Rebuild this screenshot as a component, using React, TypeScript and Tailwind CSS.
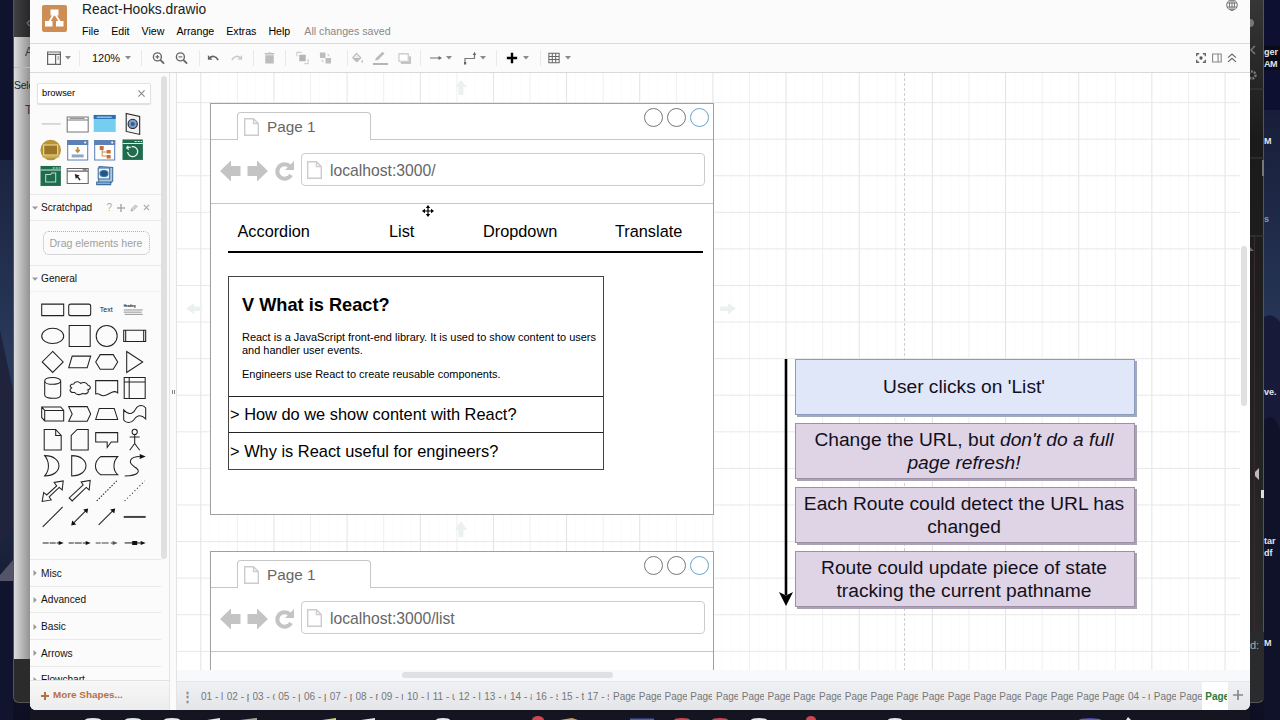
import React from "react";

const menuItems = ["File", "Edit", "View", "Arrange", "Extras", "Help"];

const pageTabs = [
  "01 - l", "02 - p", "03 - c", "05 - p", "06 - p", "07 - p", "08 - r", "09 - r",
  "10 - l", "11 - u", "12 - l", "13 - c", "14 - a", "16 - s", "15 - t", "17 - s",
  ...Array(20).fill("Page"),
  "04 - r", "Page", "Page",
];

const steps = [
  {
    text: "User clicks on 'List'",
    className: "bg-[#dfe7f8] border-[#8c9bbb] shadow-[2px_2px_0_#a3aabb]",
  },
  {
    text: (
      <>
        Change the URL, but <i>don't do a full page refresh!</i>
      </>
    ),
    className: "bg-[#dfd4e5] border-[#9d90a6] shadow-[2px_2px_0_#aba3b2]",
  },
  {
    text: "Each Route could detect the URL has changed",
    className: "bg-[#dfd4e5] border-[#9d90a6] shadow-[2px_2px_0_#aba3b2]",
  },
  {
    text: "Route could update piece of state tracking the current pathname",
    className: "bg-[#dfd4e5] border-[#9d90a6] shadow-[2px_2px_0_#aba3b2]",
  },
];

const Caret = ({ className = "" }: { className?: string }) => (
  <svg className={`h-1 w-1.5 shrink-0 ${className}`} viewBox="0 0 6 4">
    <path d="M0 0H6L3 3.6Z" fill="#8a8a8a" />
  </svg>
);

const Divider = ({ className }: { className: string }) => (
  <div className={`h-4 w-px shrink-0 bg-[#e9e9e9] ${className}`} />
);

const ToolIcon = ({
  className,
  children,
}: {
  className: string;
  children: React.ReactNode;
}) => (
  <svg
    className={`h-[14px] shrink-0 ${className}`}
    viewBox="0 0 14 14"
    fill="none"
    stroke="#666"
    strokeWidth="1.2"
  >
    {children}
  </svg>
);

const Toolbar = () => (
  <div className="flex h-[29px] shrink-0 items-center border-b border-[#d9d9d9] bg-[#fbfbfb] pl-[17px]">
    <ToolIcon className="w-[14px]">
      <path d="M.6 1H13.4V13.4H.6ZM.6 3.4H13.4M8.6 3.4V13.4M10.5 6H12M10.5 8H12" />
    </ToolIcon>
    <Caret className="ml-1" />
    <Divider className="ml-2" />
    <span className="ml-3 w-[29px] text-[11px] text-[#111]">120%</span>
    <Caret className="ml-1" />
    <Divider className="ml-2.5" />
    <ToolIcon className="ml-2.5 w-[13px]">
      <circle cx="5.8" cy="5.8" r="4.3" strokeWidth="1.5" />
      <path d="M9 9L13 13" strokeWidth="2" />
      <path d="M3.8 5.8H7.8M5.8 3.8V7.8" />
    </ToolIcon>
    <ToolIcon className="ml-2.5 w-[13px]">
      <circle cx="5.8" cy="5.8" r="4.3" strokeWidth="1.5" />
      <path d="M9 9L13 13" strokeWidth="2" />
      <path d="M3.8 5.8H7.8" />
    </ToolIcon>
    <Divider className="ml-[11px]" />
    <ToolIcon className="ml-[7px] w-3">
      <path d="M2.5 7.5C6 3.8 10.5 4.5 13 9.5" strokeWidth="2" />
      <path d="M1 3.5V9H6.5Z" fill="#666" stroke="none" />
    </ToolIcon>
    <ToolIcon className="ml-3 w-3">
      <path d="M11.5 7.5C8 3.8 3.5 4.5 1 9.5" stroke="#ccc" strokeWidth="2" />
      <path d="M13 3.5V9H7.5Z" fill="#ccc" stroke="none" />
    </ToolIcon>
    <Divider className="ml-2.5" />
    <ToolIcon className="ml-2.5 w-[11px]">
      <path d="M1 .6H5L6 0H8.5L9.5 .6H13V2.6H1ZM1.6 3.6H12.400V14H1.6Z" fill="#bcbcbc" stroke="none" />
    </ToolIcon>
    <Divider className="ml-2.5" />
    <ToolIcon className="ml-2.5 w-[13px]">
      <path d="M1 5V1H6M9 13H13V8" stroke="#ccc" />
      <path d="M3.5 3.5H10.5V10.5H3.5Z" fill="#b5b5b5" stroke="none" />
    </ToolIcon>
    <ToolIcon className="ml-2.5 w-[13px]">
      <path d="M1 1H7V7H1ZM7 7H13V13H7Z" fill="#bdbdbd" stroke="none" />
      <path d="M9 3.5H10.5V5M3.5 9V10.5H5" stroke="#ccc" />
    </ToolIcon>
    <Divider className="ml-[15px]" />
    <ToolIcon className="ml-[3px] w-[13px]">
      <path d="M6 2L10.5 6.8L6.2 11L1.8 6.8Z" fill="#eee" stroke="#bbb" />
      <path d="M2 7H10.5L6.2 11ZM12 8.5C13.4 10.5 13 12 12 12S10.8 10.5 12 8.5Z" fill="#bbb" stroke="none" />
    </ToolIcon>
    <svg className="ml-[9px] h-[15px] w-[15px] shrink-0" viewBox="0 0 15 15">
      <path d="M2 9.5L3 7L9.5 .7L11.5 2.6L5 9Z" fill="#bbb" />
      <path d="M0 12H15V14H0Z" fill="#b5b5b5" />
    </svg>
    <ToolIcon className="ml-2.5 w-[13px]">
      <path d="M3 12.3H13V5" stroke="#bbb" strokeWidth="1.8" />
      <path d="M1 2.5H11V10.5H1Z" fill="#fff" stroke="#c4c4c4" />
    </ToolIcon>
    <Divider className="ml-[9px]" />
    <ToolIcon className="ml-[9px] w-3">
      <path d="M0 7H11" stroke="#777" />
      <path d="M10 4.8L14 7L10 9.2Z" fill="#666" stroke="none" />
    </ToolIcon>
    <Caret className="ml-1" />
    <ToolIcon className="ml-[11px] w-[14px]">
      <path d="M2 13V7.5H11.5V3" stroke="#777" />
      <path d="M9.8 4L11.5 .8L13.2 4ZM1 11H3.2V13.6H1Z" fill="#666" stroke="none" />
    </ToolIcon>
    <Caret className="ml-[3px]" />
    <Divider className="ml-2.5" />
    <ToolIcon className="ml-[9px] w-3">
      <path d="M1 7H13M7 1V13" stroke="#000" strokeWidth="2.8" />
    </ToolIcon>
    <Caret className="ml-[5px]" />
    <Divider className="ml-[11px]" />
    <ToolIcon className="ml-[7px] w-3">
      <path d="M1 1.5H13V12.5H1ZM1 5.2H13M1 8.8H13M5 1.5V12.5M9 1.5V12.5" />
    </ToolIcon>
    <Caret className="ml-[5px]" />
    <div className="ml-auto flex items-center gap-[5px] pr-[13px]">
      <ToolIcon className="w-[10px]">
        <path d="M1 4.5V1H4.5M9.5 1H13V4.5M13 9.5V13H9.5M4.5 13H1V9.5" strokeWidth="1.9" />
        <circle cx="7" cy="7" r="2.3" fill="#555" stroke="none" />
      </ToolIcon>
      <ToolIcon className="w-[11px]">
        <path d="M2 2H13V12H2ZM9 2V12" stroke="#888" strokeWidth="1.4" />
      </ToolIcon>
      <ToolIcon className="w-[10px]">
        <path d="M1.500 6.500L7 1.500L12.500 6.500M1.500 12.500L7 7.500L12.500 12.500" strokeWidth="1.600" />
      </ToolIcon>
    </div>
  </div>
);

const searchResults: React.ReactNode[] = [
  <path d="M-9 0H10" stroke="#bbb" />,
  <g stroke="#777">
    <path d="M-10.5 -7H10.5V8H-10.5Z" fill="#fff" />
    <path d="M-10.5 -4H10.5M-8 -5.6H7" />
  </g>,
  <g stroke="none">
    <path d="M-11 -9H11V8H-11Z" fill="#75cdf0" />
    <path d="M-11 -9H11V-5H-11Z" fill="#2c6eb0" />
    <path d="M-8 -7.5H7V-6H-8Z" fill="#8cc4e8" />
  </g>,
  <g stroke="#222">
    <path d="M-6.5 -10.5L7 -7.5V10.5L-6.5 7.5Z" fill="#f2f2f2" />
    <circle r="4.6" cx="0" cy="0" fill="#7ba0cf" />
    <circle r="2" fill="#38598c" stroke="none" />
  </g>,
  <g stroke="none">
    <circle r="10.3" fill="#b89438" />
    <path d="M-7 -5H7V5H-7Z" fill="#9c7826" stroke="#f1dfa6" />
    <path d="M-9 7H9" stroke="#d8bf74" />
  </g>,
  <g stroke="#5d81b6">
    <path d="M-10 -9.5H10V10H-10Z" fill="#fff" />
    <path d="M-10 -9.5H10V-5.5H-10Z" fill="#5d81b6" />
    <circle cx="7.5" cy="-7.5" r="1" fill="#fff" stroke="none" />
    <path d="M0 -3V1M-2 0L0 2L2 0" stroke="#bd8f35" strokeWidth="1.7" />
    <path d="M-6 6H6" strokeWidth="3" stroke="#8da7cb" />
  </g>,
  <g stroke="#5d81b6">
    <path d="M-10 -9.5H10V10H-10Z" fill="#fff" />
    <path d="M-10 -9.5H10V-5.5H-10Z" fill="#5d81b6" />
    <circle cx="7.5" cy="-7.5" r="1" fill="#fff" stroke="none" />
    <path d="M-2.5 -1V6H3M-2.5 2H3" fill="none" stroke="#d08e4c" />
    <path d="M-5 -4H-1V0H-5ZM2 0H6V3.5H2ZM2 5H6V8.5H2Z" fill="#c5703c" stroke="none" />
  </g>,
  <g stroke="none">
    <path d="M-10.2 -10.5H10.2V10H-10.2Z" fill="#1f6b4e" />
    <path d="M-10 -6.5H10M2 -8.5H4M5 -8.5H7M8 -8.5H9.5" stroke="#d8ece2" />
    <path d="M-5 2A5 5 0 1 0 -1 -3.2M-5.5 -2.5H-2M-4.5 -4L-6 -2L-3.8 -.5" fill="none" stroke="#e8f4ee" strokeWidth="1.3" />
  </g>,
  <g stroke="none">
    <path d="M-10.2 -10H10.2V10H-10.2Z" fill="#1f6b4e" />
    <path d="M-10 -6H10M2 -8H4M5 -8H7M8 -8H9.5" stroke="#d8ece2" />
    <path d="M-5 6V-1.5H0L1 -3H5V6Z" fill="none" stroke="#b8dccb" />
  </g>,
  <g stroke="#666">
    <path d="M-10.5 -7.5H10.5V7.5H-10.5Z" fill="#fff" />
    <path d="M-10.5 -4.8H10.5M5 -6.2H9" />
    <path d="M-3 -2L2 -.5L.5 .6L3 3.8L1.8 4.6L-.5 1.5L-1.8 3Z" fill="#222" stroke="none" />
  </g>,
  <g stroke="#3f6d9c">
    <path d="M-5.5 -9.5L8 -8.5V5L6 7H-6Z" fill="#a9cae4" />
    <path d="M-6.5 -8H5V3H-6.5Z" fill="#e2eff8" />
    <ellipse cx="-.7" cy="-2.5" rx="4" ry="3" fill="#1f5588" />
    <path d="M-8 6H6V8.7H-8Z" fill="#83b1d6" />
  </g>,
];

const generalShapes: React.ReactNode[] = [
  <path d="M-11 -5.8H11V5.7H-11Z" />,
  <rect x="-11" y="-5.8" width="22" height="11.5" rx="2" />,
  <text x="-.5" y="2.5" textAnchor="middle" fontSize="7" fill="#222" stroke="none">Text</text>,
  <g>
    <text x="-11" y="-3" fontSize="3" fontWeight="bold" fill="#000" stroke="none">Heading</text>
    <path d="M-11 0H8M-11 2.2H7M-10 4.4H8" stroke="#777" strokeWidth=".8" />
  </g>,
  <ellipse rx="11" ry="7.6" />,
  <path d="M-10.5 -10.5H10.5V10.5H-10.5Z" />,
  <circle r="10.5" />,
  <path d="M-11 -5.6H11V5.6H-11ZM-9 -5.6V5.6M9 -5.6V5.6" />,
  <path d="M0 -10.5L10.5 0L0 10.5L-10.5 0Z" />,
  <path d="M-7.5 -5.8H11L7.5 5.8H-11Z" />,
  <path d="M-6.5 -7.3H6.5L11 0L6.5 7.3H-6.5L-11 0Z" />,
  <path d="M-8 -10.5L8 0L-8 10.5Z" />,
  <path d="M-8 -7C-8 -11.5 8 -11.5 8 -7V7C8 11.5 -8 11.5 -8 7ZM-8 -7C-8 -2.5 8 -2.5 8 -7" />,
  <path d="M-6 -4C-9 -4 -11 -2 -8 0C-12 3 -8 5 -5 4.5C-3 7.5 1 7 3 5.5C7 7 10 4 8 2C12 1 11 -2.5 8 -3C7 -6 3 -6 1 -4.5C-1 -7 -5 -6.5 -6 -4Z" />,
  <path d="M-11 -7.3H11V5C5 0 0 11 -6 7C-8 5.8 -9 5.5 -11 6Z" />,
  <path d="M-10.5 -10.5H10.5V10.5H-10.5ZM-10.5 -6H10.5M-5.5 -10.5V10.5" />,
  <path d="M-11 -7H8L11 -3.5V7H-8L-11 3.5ZM-11 -7L-8 -3.5V7M-8 -3.5H11" />,
  <path d="M-11 -7.3H7.5L11 0L7.5 7.3H-11L-7.5 0Z" />,
  <path d="M-7.5 -5.5H7.5L11 5.5H-11Z" />,
  <path d="M-11 -4C-5 3 0 -2 1 -5C4 -10 9 -9 11 -6V5C5 -1 1 3 -1 6C-4 10 -9 9 -11 6Z" />,
  <path d="M-8.5 -10.5H3L8.5 -4.5V10H-8.5ZM3 -10.5V-4.5H8.5" />,
  <path d="M-2.5 -10.5H8.5V10H-8.5V-4.5Z" />,
  <path d="M-11 -7.3H11V2H4.5L.5 7.5V2H-11Z" />,
  <g>
    <circle cy="-8" r="2.6" />
    <path d="M0 -5.3V3.5M-5 -3H5M0 3.5L-5 10.3M0 3.5L5 10.3" />
  </g>,
  <path d="M-8 -10.3C11 -10.3 11 10 -8 10C-3 4 -3 -4 -8 -10.3Z" />,
  <path d="M-8 -10.3C11 -10.3 11 10 -8 10Z" />,
  <path d="M-6 -9.3H11C6 -4 6 4 11 8.8H-6C-13 4 -13 -4 -6 -9.3Z" />,
  <g>
    <path d="M-10 10C4 10 7 5 0 1C-8 -4 -4 -9.5 5 -9.5" />
    <path d="M5 -12L11 -9.5L5 -7Z" fill="#111" stroke="none" />
  </g>,
  <path d="M10.5 -10L9.5 -1L6.5 -3.5L-3.5 6L-1.5 9L-10.5 10.5L-9 1.5L-6 4L4 -5L1.5 -8.5Z" />,
  <path d="M10.5 -10.5L9.5 -1L6.5 -3.5L-7.5 10L-10.5 7L3.5 -6L1.5 -9Z" />,
  <path d="M-10 10L10 -10" strokeDasharray="1.5 1.5" />,
  <path d="M-10 10L10 -10" strokeDasharray="1 2.5" />,
  <path d="M-10 10L10 -10" />,
  <g>
    <path d="M-7 7L7 -7" />
    <path d="M8.5 -8.5L7.5 -3.5L3.5 -7.5ZM-8.5 8.5L-7.5 3.5L-3.5 7.5Z" fill="#111" stroke="none" />
  </g>,
  <g>
    <path d="M-8 8L7 -7" />
    <path d="M8.5 -8.5L7.5 -3.5L3.5 -7.5Z" fill="#111" stroke="none" />
  </g>,
  <path d="M-11 0H11" stroke="#444" strokeWidth="2" />,
  <g>
    <path d="M-10 0H8" strokeDasharray="6 1" />
    <path d="M6 -2L11 0L6 2Z" fill="#111" stroke="none" />
  </g>,
  <g>
    <path d="M-11 0H8" strokeDasharray="5 1 7 1" />
    <path d="M6 -2L11 0L6 2Z" fill="#111" stroke="none" />
  </g>,
  <g>
    <path d="M-11 0H8" strokeDasharray="5 1 7 2" stroke="#444" />
    <path d="M6 -2L11 0L6 2Z" fill="#555" stroke="none" />
  </g>,
  <g>
    <path d="M-10 0H8" />
    <path d="M6 -2L11 0L6 2ZM-2.5 -2H2.5V2H-2.5Z" fill="#111" stroke="none" />
  </g>,
];

const ShapeCell = ({ children }: { children: React.ReactNode }) => (
  <svg
    className="h-[25.9px] w-[27.4px]"
    viewBox="-13.7 -12.95 27.4 25.9"
    fill="none"
    stroke="#222"
    strokeWidth="1.05"
  >
    {children}
  </svg>
);

const Section = ({ title, open, children }: { title: string; open?: boolean; children?: React.ReactNode }) => (
  <div className="flex h-[26.6px] shrink-0 items-center border-t border-[#e8e8e8] pl-[2px] pt-px text-[10.15px] text-[#111]">
    <svg className="mr-[3px] h-[6px] w-[6px]" viewBox="0 0 6 6">
      <path d={open ? "M0 1.5H6L3 4.8Z" : "M1.5 0V6L4.8 3Z"} fill="#999" />
    </svg>
    {title}
    {children}
  </div>
);

const Sidebar = () => (
  <div className="flex w-[139px] shrink-0 flex-col bg-[#fbfbfb]">
    <div className="flex h-[607px] overflow-hidden">
      <div className="flex w-[131px] flex-col pt-[10px]">
        <div className="ml-[7px] flex h-[21px] w-[114px] shrink-0 items-center justify-between rounded-xs border border-[#e2e2e2] bg-white px-1 text-[9.3px] text-black shadow-[0_1px_1px_#ddd]">
          browser
          <svg className="mr-px h-[7px] w-[7px]" viewBox="0 0 8 8">
            <path d="M.5 .5L7.5 7.5M7.5 .5L.5 7.5" stroke="#888" strokeWidth="1.3" />
          </svg>
        </div>
        <div className="ml-[6.5px] mt-[7px] grid shrink-0 grid-cols-[repeat(4,27.4px)]">
          {searchResults.map((shape, index) => (
            <ShapeCell key={index}>{shape}</ShapeCell>
          ))}
        </div>
        <div className="mt-[5px] flex flex-col">
          <Section title="Scratchpad" open>
            <div className="ml-auto mr-[11px] flex items-center gap-[5px] text-[10px] text-[#aaa]">
              ?
              <svg className="h-2 w-2" viewBox="0 0 8 8">
                <path d="M0 4H8M4 0V8" stroke="#aaa" strokeWidth="1.5" />
              </svg>
              <svg className="h-2 w-2" viewBox="0 0 8 8">
                <path d="M1 7L1.5 5L5.5 1L7 2.5L3 6.5Z" fill="#ddd" stroke="#aaa" />
              </svg>
              <svg className="h-[7px] w-[7px]" viewBox="0 0 8 8">
                <path d="M1 1L7 7M7 1L1 7" stroke="#aaa" strokeWidth="1.4" />
              </svg>
            </div>
          </Section>
          <div className="flex h-[44.4px] items-center justify-center border-t border-[#e8e8e8]">
            <div className="ml-px flex h-6 w-[107px] items-center justify-center rounded-md border-[1.5px] border-dotted border-[#b0b0b0] pt-px text-[10.6px] text-[#a0a0a0]">
              Drag elements here
            </div>
          </div>
          <Section title="General" open />
          <div className="border-t border-[#f0f0f0] pb-[3px] pl-[8.5px] pt-[5px]">
            <div className="grid grid-cols-[repeat(4,27.4px)]">
              {generalShapes.map((shape, index) => (
                <ShapeCell key={index}>{shape}</ShapeCell>
              ))}
            </div>
          </div>
          <Section title="Misc" />
          <Section title="Advanced" />
          <Section title="Basic" />
          <Section title="Arrows" />
          <Section title="Flowchart" />
        </div>
      </div>
      <div className="mt-[3px] h-[483px] w-[6px] rounded-full bg-[#e0e0e0]" />
    </div>
    <div className="flex flex-1 items-center border-t border-[#e2e2e2] bg-linear-to-b from-[#f8f8f8] to-[#ececee] pl-[11px] text-[9.9px] font-bold text-[#b8703f]">
      <svg className="mr-1 h-2 w-2" viewBox="0 0 8 8">
        <path d="M0 4H8M4 0V8" stroke="#b8703f" strokeWidth="2" />
      </svg>
      More Shapes...
    </div>
  </div>
);

const PageIcon = () => (
  <svg className="h-[18px] w-[15px]" viewBox="0 0 15 18">
    <path d="M.7 .7H9.5L14.3 5.5V17.3H.7ZM9.5 .7V5.5H14.3" fill="#fff" stroke="#ccc" strokeWidth="1.4" />
  </svg>
);

const BrowserMock = ({
  url,
  className,
  children,
}: {
  url: string;
  className: string;
  children?: React.ReactNode;
}) => (
  <div className={`absolute left-[33px] w-[504px] border-[1.5px] border-[#a0a0a0] bg-white ${className}`}>
    <div className="flex h-[36px]">
      <div className="w-[26px] border-b border-[#c6c6c6]" />
      <div className="mt-2 flex w-[134px] items-center rounded-t-[4px] border border-b-0 border-[#c6c6c6] pl-[6px] text-[15.3px] text-[#666]">
        <PageIcon />
        <span className="ml-2 pt-[2px]">Page 1</span>
      </div>
      <div className="flex flex-1 items-start justify-end gap-1 border-b border-[#c6c6c6] pr-[4px] pt-[3.5px]">
        <div className="h-[19px] w-[19px] rounded-full border border-[#777]" />
        <div className="h-[19px] w-[19px] rounded-full border border-[#777]" />
        <div className="h-[19px] w-[19px] rounded-full border border-[#6aa2c8]" />
      </div>
    </div>
    <div className="flex h-[64px] items-start border-b border-[#c6c6c6] pl-[9px] pt-[13px]">
      <svg className="mt-[6px] h-[24px] w-[76px]" viewBox="0 0 76 24" fill="#c4c4c4">
        <path d="M0 12L11 1.5V7H20.5V17H11V22.5Z" />
        <path d="M48 12L37 1.5V7H27.5V17H37V22.5Z" />
        <path d="M70 7.5A7.3 7.3 0 1 0 71 16" fill="none" stroke="#c4c4c4" strokeWidth="4" />
        <path d="M74 2V11H65Z" />
      </svg>
      <div className="ml-[5px] flex h-[33px] w-[404px] items-center rounded-[4px] border border-[#ccc] pl-[5px] text-[15.7px] text-[#666]">
        <PageIcon />
        <span className="ml-2 pt-[2px]">{url}</span>
      </div>
    </div>
    {children}
  </div>
);

const columnLines = Array.from({ length: 29 }, (_, i) => 23.8 + i * 36.58);
const rowLines = Array.from({ length: 16 }, (_, i) => 29.6 + i * 36.58);

const Canvas = () => (
  <div className="relative h-[597px] overflow-hidden bg-white">
    <svg className="absolute left-0 top-0 h-[597px] w-[1073px]" viewBox="0 0 1073 597">
      {columnLines.map((x) => (
        <path key={x} d={`M${x + 9.1} 0V597M${x + 18.3} 0V597M${x + 27.4} 0V597`} stroke="#fbfbfb" />
      ))}
      {columnLines.map((x, i) => (
        <path key={x} d={`M${x} 0V597`} stroke={i % 2 ? "#efefef" : "#e3e3e3"} />
      ))}
      {rowLines.map((y) => (
        <path key={y} d={`M0 ${y}H1063`} stroke="#e8e8e8" />
      ))}
      <path d="M727.5 0V597" stroke="#d0d0d0" strokeDasharray="3 2" />
      <path
        d="M284 7L290 14H286.5V22H281.5V14H278ZM284 448L290 457H286.5V464H281.5V457H278ZM9 235.5L17 230V233.5H25V238H17V241.5ZM559 235.5L551 230V233.5H543V238H551V241.5Z"
        fill="#ebf1f1"
      />
    </svg>

    <BrowserMock url="localhost:3000/" className="top-[30px] h-[412px]">
      <div className="ml-[17px] flex h-[49px] w-[475px] items-center border-b-2 border-black pt-[8px] text-[16.3px] text-black">
        <span className="ml-[9.5px] w-[151.5px]">Accordion</span>
        <span className="w-[94px]">List</span>
        <span className="w-[132px]">Dropdown</span>
        <span>Translate</span>
      </div>
      <div className="ml-[17px] mt-[23px] w-[376px] border border-[#444] text-black">
        <div className="h-[118.5px] pl-[13px] pt-[17px]">
          <h1 className="text-[18.2px] font-bold leading-[22px]">V What is React?</h1>
          <p className="mt-[15px] w-[362px] text-[10.98px] leading-[13px]">
            React is a JavaScript front-end library. It is used to show content to users
            <br />
            and handler user events.
          </p>
          <p className="mt-[11px] text-[10.98px] leading-[13px]">
            Engineers use React to create reusable components.
          </p>
        </div>
        <div className="flex h-[36.5px] items-center border-t border-[#222] pl-px text-[16.4px]">
          &gt; How do we show content with React?
        </div>
        <div className="flex h-[36.5px] items-center border-t border-[#222] pl-px pt-px text-[16.4px]">
          &gt; Why is React useful for engineers?
        </div>
      </div>
    </BrowserMock>

    <BrowserMock url="localhost:3000/list" className="top-[478px] h-[200px]" />

    <svg className="absolute left-[602px] top-[286px] h-[248px] w-[14px]" viewBox="0 0 14 248">
      <path d="M7 0V236" stroke="#000" strokeWidth="2.6" />
      <path d="M0 233L7 247L14 233L7 236.5Z" />
    </svg>
    <div className="absolute left-[618px] top-[286px] flex w-[340px] flex-col gap-2">
      {steps.map((step, index) => (
        <div
          key={index}
          className={`flex h-14 items-center justify-center border pb-px pl-[3px] pr-[5px] text-center text-[19.2px] leading-[23px] text-[#12101c] ${step.className}`}
        >
          <p>{step.text}</p>
        </div>
      ))}
    </div>

    <div className="absolute right-[3px] top-[173px] h-[160px] w-[6px] rounded-full bg-[#e0e0e0]" />
    <svg className="absolute left-[245px] top-[132px] h-3 w-3" viewBox="0 0 12 12">
      <path d="M6 1V11M1 6H11" stroke="#000" strokeWidth="1.2" />
      <path d="M6 0L8.2 3H3.8ZM6 12L3.8 9H8.2ZM0 6L3 3.8V8.2ZM12 6L9 8.2V3.8Z" />
    </svg>
  </div>
);

const PageTabs = () => (
  <div className="flex h-[29px] items-center border-t border-[#e6e7ea] bg-linear-to-b from-[#f0f1f4] to-[#e4e5e9] text-[10px] text-[#777]">
    <div className="w-[21px] text-center text-[13px] font-bold leading-none text-[#888]">⋮</div>
    <div className="flex h-full">
      {pageTabs.map((label, index) => (
        <div key={index} className="flex h-full w-[25.75px] shrink-0 items-center pl-[3px]">
          <span className="w-[22px] overflow-hidden whitespace-nowrap">{label}</span>
        </div>
      ))}
      <div className="flex h-full w-[26px] items-center bg-white pl-[3px] font-bold text-[#2f7a37]">
        <span className="w-[22px] overflow-hidden">Page</span>
      </div>
    </div>
    <svg className="ml-[5px] mt-[-3px] h-[10px] w-[10px]" viewBox="0 0 10 10">
      <path d="M0 5H10M5 0V10" stroke="#888" strokeWidth="1.7" />
    </svg>
  </div>
);

const Dock = () => (
  <svg className="absolute bottom-0 left-0 h-[10px] w-full" viewBox="0 0 1280 10">
    <path d="M30 0H1250V10H30Z" fill="#141521" />
    <g fill="#e6e8ee">
      <ellipse cx="93" cy="10" rx="8" ry="2" />
      <ellipse cx="133" cy="10" rx="8" ry="2" />
      <ellipse cx="172" cy="10" rx="8" ry="2" />
      <path d="M207 10L220 8V10ZM361 10L375 8V10Z" />
      <ellipse cx="443" cy="10" rx="7" ry="2" />
      <ellipse cx="759" cy="10" rx="8" ry="2" />
      <ellipse cx="895" cy="10" rx="7" ry="2" />
      <path d="M1126 10L1128 7L1131 10Z" />
    </g>
    <path d="M240 10L257 8V10Z" fill="#a8a690" />
    <path d="M322 10L336 8V10Z" fill="#d4d46a" />
    <path d="M560 10L572 8L578 10Z" fill="#cf9d54" />
    <ellipse cx="1090" cy="10" rx="11" ry="1.8" fill="#5b60c4" />
    <path d="M630 8.5H654V10H630Z" fill="#4a5fb5" />
    <g fill="#cf4650">
      <ellipse cx="538" cy="10" rx="6" ry="4" />
      <ellipse cx="682" cy="10" rx="8" ry="2" />
      <ellipse cx="720" cy="10" rx="8" ry="2" />
      <ellipse cx="811" cy="10" rx="5" ry="4" />
    </g>
  </svg>
);

export default function App() {
  return (
    <div className="relative h-[720px] w-[1280px] overflow-hidden bg-linear-to-b from-[#10122b] via-[#293a5b] to-[#0d0e22] font-['Liberation_Sans',sans-serif]">
      {/* desktop wallpaper on the right edge */}
      <svg className="absolute right-0 top-0 h-full w-4" viewBox="0 0 16 720">
        <path d="M0 0H16V110H0Z" fill="#0d1030" />
        <path d="M0 317Q8 312 16 322V720H0Z" fill="#171a38" />
        <path d="M0 420Q10 410 16 430V720H0Z" fill="#10122a" />
      </svg>
      <svg className="absolute left-0 top-0 h-full w-[13px]" viewBox="0 0 13 720">
        <path d="M0 0H13V160H0Z" fill="#10132e" />
        <path d="M0 330L13 390V530L0 545Z" fill="#20233c" />
        <path d="M0 575L13 560V581H0Z" fill="#545468" />
        <path d="M0 581H13V720H0Z" fill="#11142e" />
      </svg>

      {/* editor window behind, left side */}
      <div className="absolute left-[13px] top-0 flex h-[703px] w-10 flex-col overflow-hidden rounded-bl-md border-b border-l border-[#555] bg-[#2b2b2c] text-[12px] text-[#333]">
        <div className="flex h-[37px] items-center bg-linear-to-r from-[#414143] to-[#242425] to-45% pl-3 pt-2 text-[14px] text-[#777]">
          ‹
        </div>
        <div className="flex h-[622px] flex-col bg-linear-to-r from-[#dcdcdc] to-[#8c8c8c] to-45%">
          <div className="h-[31px] border-b border-[#bbb] pl-[11px] pt-[6px]">A</div>
          <div className="pt-[8px] text-[10.5px] leading-[18px] tracking-tight text-[#222]">Sele</div>
          <div className="pl-[11px] pt-2 leading-4">T</div>
        </div>
      </div>

      {/* editor window behind, right side */}
      <div className="absolute left-[1240px] top-0 h-[703px] w-6 rounded-br-md border-b border-r border-[#555] bg-linear-to-b from-[#363636] via-[#1a1a1b] via-20% to-[#292b2d]">
        <svg className="h-[700px] w-6" viewBox="0 0 24 700" fill="none">
          <path d="M10 89H24M10 158H24M10 236H24" stroke="#3c3c3c" />
          <circle cx="10" cy="23" r="4" fill="#777" />
          <path d="M15 46L11 50L15 54M15 677L11 681L15 685" stroke="#777" strokeWidth="1.5" />
          <circle cx="12" cy="75" r="3.5" stroke="#777" strokeWidth="2.5" strokeDasharray="2 1" />
          <path d="M22 160H24V176H22Z" fill="#777" />
          <path d="M14.5 236V632" stroke="#40282a" />
          <path d="M10 247L14 251H10Z" fill="#666" />
          <path d="M15 472L19 468V480L15 476Z" fill="#bbb" />
          <path d="M21 490H24V498H21Z" fill="#ddd" />
          <path d="M10 632H24V700H10Z" fill="#292b2d" />
        </svg>
      </div>
      <span className="absolute left-[1250px] top-[639px] text-[11px] leading-3 text-[#aaa]">d:</span>
      <div className="absolute left-[1264px] top-[46px] w-4 overflow-hidden text-[9px] font-bold leading-3 text-[#e4e4ec]">
        <div className="bg-[#0a0b18]">ger</div>
        <div className="bg-[#0a0b18] tracking-tighter">AM</div>
        <div className="mt-[65px]">M</div>
        <div className="mt-[66px] text-[#999]">s</div>
        <div className="mt-[161px]">ve.</div>
        <div className="mt-[137px]">tar</div>
        <div>df</div>
        <div className="mt-[78px]">M</div>
      </div>

      <Dock />

      <div className="absolute left-[30px] top-0 flex h-[710px] w-[1220px] flex-col overflow-hidden rounded-b-md bg-[#fbfbfb]">
        <header className="flex h-[44px] shrink-0 border-b border-[#d9d9d9] pl-3">
          <svg className="mt-[5px] h-[27px] w-[25px]" viewBox="0 0 25 27">
            <rect width="25" height="27" rx="2" fill="#cd8e55" />
            <path d="M12.5 8L6.5 18M12.5 8L18.5 18" stroke="#fff" strokeWidth="1.8" />
            <path d="M8.5 4.5H16.5V10.5H8.5ZM3 16H10.5V21.5H3ZM14 16H21.5V21.5H14Z" fill="#fff" />
          </svg>
          <div className="ml-[15px] flex flex-col">
            <h1 className="mt-px text-[13.8px] leading-[17px] text-[#222]">React-Hooks.drawio</h1>
            <nav className="mt-[6px] flex gap-[12px] text-[10.65px] leading-[14px] text-black">
              {menuItems.map((item) => (
                <span key={item}>{item}</span>
              ))}
              <span className="ml-[2px] text-[#888]">All changes saved</span>
            </nav>
          </div>
          <svg className="ml-auto mr-[12px] mt-[-1px] h-3 w-3" viewBox="0 0 12 12" fill="none" stroke="#777">
            <circle cx="6" cy="6" r="5.3" />
            <ellipse cx="6" cy="6" rx="2.5" ry="5.3" />
            <path d="M1 4H11M1 8H11M6 .5V11.5" />
          </svg>
        </header>
        <Toolbar />
        <div className="flex min-h-0 flex-1">
          <Sidebar />
          <div className="flex w-2 shrink-0 items-center justify-center border-x border-[#e4e4e4] bg-[#fbfbfb]">
            <div className="h-1 w-[3px] border-x border-[#888]" />
          </div>
          <div className="flex min-w-0 flex-1 flex-col">
            <Canvas />
            <div className="h-[11px] bg-[#f8f9fb] pl-[225px] pt-[2px]">
              <div className="h-[6px] w-[211px] rounded-full bg-[#dfe0e2]" />
            </div>
            <PageTabs />
          </div>
        </div>
      </div>
    </div>
  );
}
